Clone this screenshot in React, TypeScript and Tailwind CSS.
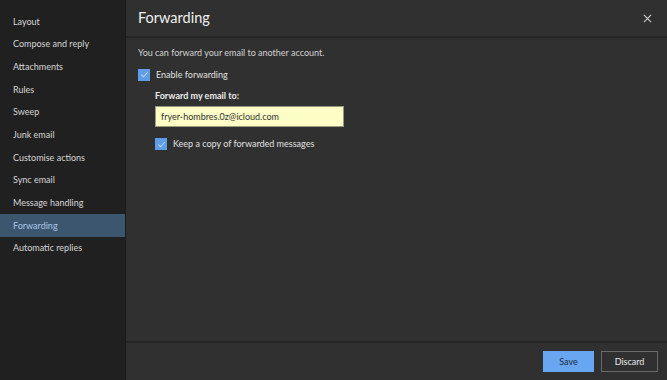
import React from "react";

const items = [
  "Layout",
  "Compose and reply",
  "Attachments",
  "Rules",
  "Sweep",
  "Junk email",
  "Customise actions",
  "Sync email",
  "Message handling",
  "Forwarding",
  "Automatic replies",
];

function Check() {
  return (
    <span className="w-[12px] h-[12px] bg-[#5f9de8] flex items-center justify-center shrink-0">
      <svg width="9" height="9" viewBox="0 0 10 10">
        <path d="M1.5 5.2 L4 7.5 L8.5 2.5" fill="none" stroke="#bcd6f5" strokeWidth="1.2" />
      </svg>
    </span>
  );
}

export default function App() {
  return (
    <div
      className="w-[667px] h-[380px] flex bg-[#303030] text-[#e4e4e4] overflow-hidden"
      style={{ fontFamily: 'Lato, "Open Sans", sans-serif' }}
    >
      <div className="w-[126px] shrink-0 bg-[#202020] border-r border-[#1a1a1a] pt-[10px] flex flex-col">
        {items.map((it) => (
          <div
            key={it}
            className={
              "h-[22.7px] flex items-center pl-[13px] text-[9px] " +
              (it === "Forwarding" ? "bg-[#3d5670] text-[#a9c6e6]" : "text-[#d6d6d6]")
            }
          >
            {it}
          </div>
        ))}
      </div>
      <div className="flex-1 flex flex-col">
        <div className="h-[38px] flex items-center justify-between pl-[12px] pr-[15px] border-b-2 border-[#262626]">
          <span className="text-[14.5px] text-[#f0f0f0]">Forwarding</span>
          <svg width="9" height="9" viewBox="0 0 10 10">
            <path d="M1 1 L9 9 M9 1 L1 9" stroke="#d0d0d0" strokeWidth="1.2" />
          </svg>
        </div>
        <div className="flex-1 pl-[12px] pt-[9px] flex flex-col">
          <div className="text-[9px] text-[#d2d2d2] h-[12px] leading-[12px]">You can forward your email to another account.</div>
          <div className="flex items-center gap-[6px] mt-[7px] h-[17px]">
            <Check />
            <span className="text-[9px] text-[#e0e0e0]">Enable forwarding</span>
          </div>
          <div className="pl-[17px] flex flex-col">
            <div className="text-[9px] font-bold text-[#ececec] mt-[6px] h-[14px] leading-[14px]">Forward my email to:</div>
            <div className="mt-[3px] w-[189px] h-[21px] bg-[#fdfdc6] border border-[#9a9a80] flex items-center pl-[5px] text-[9px] text-[#333]">
              fryer-hombres.0z@icloud.com
            </div>
            <div className="flex items-center gap-[6px] mt-[10px] h-[14px]">
              <Check />
              <span className="text-[9px] text-[#e0e0e0]">Keep a copy of forwarded messages</span>
            </div>
          </div>
        </div>
        <div className="h-[39px] border-t-2 border-[#262626] flex items-start justify-end gap-[7px] pr-[9px] pt-[8px]">
          <button className="w-[51px] h-[21px] bg-[#69a6f2] text-[#1e2a38] text-[9px]">Save</button>
          <button className="w-[57px] h-[21px] border border-[#6a6a6a] text-[#e8e8e8] text-[9px]">Discard</button>
        </div>
      </div>
    </div>
  );
}
